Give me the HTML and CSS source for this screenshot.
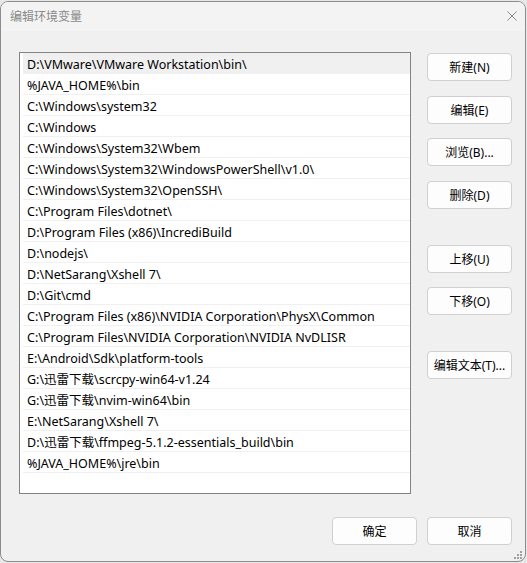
FILE: index.html
```html
<!DOCTYPE html>
<html lang="zh-CN">
<head>
<meta charset="utf-8">
<title>编辑环境变量</title>
<link rel="stylesheet" href="styles.css">
</head>
<body>
<div class="window">
  <div class="titlebar">
    <span class="title">编辑环境变量</span>
    <svg class="close" width="10" height="10" viewBox="0 0 10 10"><path d="M0.5 0.5 L9.5 9.5 M9.5 0.5 L0.5 9.5" stroke="#8a8a8a" stroke-width="1" fill="none"/></svg>
  </div>
  <div class="content">
    <div class="main">
      <div class="list">
        <div class="row selected">D:\VMware\VMware Workstation\bin\</div>
        <div class="row">%JAVA_HOME%\bin</div>
        <div class="row">C:\Windows\system32</div>
        <div class="row">C:\Windows</div>
        <div class="row">C:\Windows\System32\Wbem</div>
        <div class="row">C:\Windows\System32\WindowsPowerShell\v1.0\</div>
        <div class="row">C:\Windows\System32\OpenSSH\</div>
        <div class="row">C:\Program Files\dotnet\</div>
        <div class="row">D:\Program Files (x86)\IncrediBuild</div>
        <div class="row">D:\nodejs\</div>
        <div class="row">D:\NetSarang\Xshell 7\</div>
        <div class="row">D:\Git\cmd</div>
        <div class="row">C:\Program Files (x86)\NVIDIA Corporation\PhysX\Common</div>
        <div class="row">C:\Program Files\NVIDIA Corporation\NVIDIA NvDLISR</div>
        <div class="row">E:\Android\Sdk\platform-tools</div>
        <div class="row">G:\迅雷下载\scrcpy-win64-v1.24</div>
        <div class="row">G:\迅雷下载\nvim-win64\bin</div>
        <div class="row">E:\NetSarang\Xshell 7\</div>
        <div class="row">D:\迅雷下载\ffmpeg-5.1.2-essentials_build\bin</div>
        <div class="row">%JAVA_HOME%\jre\bin</div>
      </div>
      <div class="side">
        <button class="btn b-new">新建(N)</button>
        <button class="btn b-edit">编辑(E)</button>
        <button class="btn b-browse">浏览(B)...</button>
        <button class="btn b-del">删除(D)</button>
        <button class="btn b-up">上移(U)</button>
        <button class="btn b-down">下移(O)</button>
        <button class="btn b-text">编辑文本(T)...</button>
      </div>
    </div>
    <div class="footer">
      <button class="btn">确定</button>
      <button class="btn">取消</button>
    </div>
  </div>
  <svg class="grip" width="9" height="9" viewBox="0 0 9 9">
    <rect x="6" y="0" width="2" height="2" fill="#a0a0a0"/>
    <rect x="3" y="3" width="2" height="2" fill="#a0a0a0"/>
    <rect x="6" y="3" width="2" height="2" fill="#a0a0a0"/>
    <rect x="0" y="6" width="2" height="2" fill="#a0a0a0"/>
    <rect x="3" y="6" width="2" height="2" fill="#a0a0a0"/>
    <rect x="6" y="6" width="2" height="2" fill="#a0a0a0"/>
  </svg>
</div>
</body>
</html>
```

FILE: styles.css
```css
* { box-sizing: border-box; }
html, body {
  margin: 0;
  padding: 0;
  background: #e8e8e8;
}
body {
  font-family: "Noto Sans", "Noto Sans CJK SC", sans-serif;
  font-size: 12px;
  color: #000;
}
.window {
  position: relative;
  width: 526px;
  height: 561px;
  margin-top: 1px;
  border: 1px solid #8c8c8c;
  border-radius: 8px;
  background: #f0f0f0;
  overflow: hidden;
  display: flex;
  flex-direction: column;
}
.titlebar {
  height: 29px;
  flex: none;
  background: #f3f3f3;
  display: flex;
  align-items: center;
  padding-left: 9px;
  padding-right: 8px;
  padding-bottom: 2px;
}
.title {
  color: #8a8a8a;
  font-size: 12px;
}
.close {
  margin-left: auto;
  display: block;
  margin-top: 1px;
}
.content {
  padding: 21px 13px 0 18px;
}
.main {
  display: flex;
  gap: 16px;
}
.list {
  width: 392px;
  height: 442px;
  border: 1px solid #838383;
  background: #fff;
  padding: 0 0 0 3px;
}
.row {
  height: 21px;
  padding-top: 3px;
  line-height: 17px;
  font-size: 12.5px;
  border-bottom: 1px solid #f0f0f0;
  padding-left: 4px;
  white-space: nowrap;
  overflow: hidden;
}
.row.selected {
  background: #f0f0f0;
}
.side {
  width: 85px;
  display: flex;
  flex-direction: column;
}
.btn {
  width: 85px;
  height: 28px;
  border: 1px solid #d0d0d0;
  border-radius: 4px;
  background: #fdfdfd;
  font-family: inherit;
  font-size: 12px;
  color: #000;
  padding: 0;
  margin: 0;
}
.b-new { margin-top: 1px; }
.b-edit { margin-top: 15px; }
.b-browse { margin-top: 14px; }
.b-del { margin-top: 15px; }
.b-up { margin-top: 36px; }
.b-down { margin-top: 14px; }
.b-text { margin-top: 36px; }
.footer {
  display: flex;
  justify-content: flex-end;
  gap: 10px;
  margin-top: 23px;
}
.grip {
  position: absolute;
  right: 2px;
  bottom: 1px;
}
```
